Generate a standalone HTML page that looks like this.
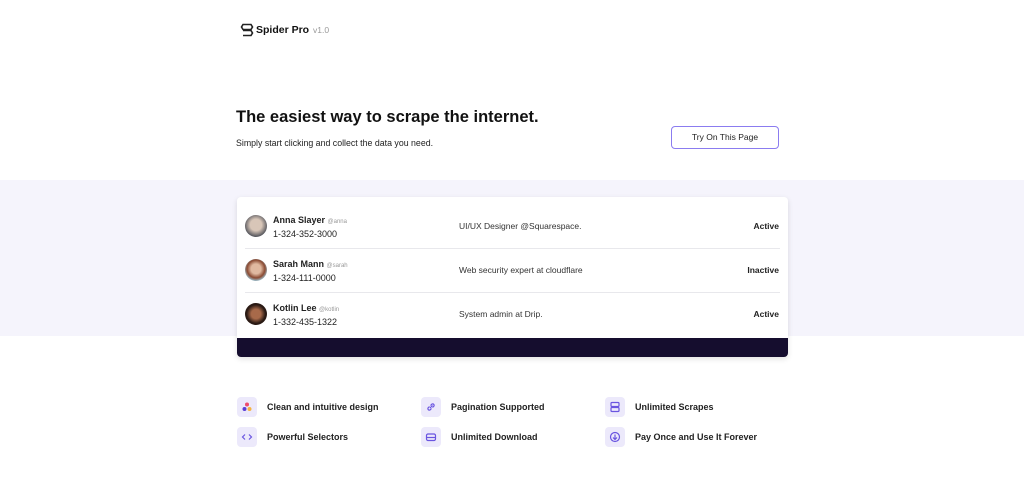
<!DOCTYPE html>
<html><head><style>
*{margin:0;padding:0;box-sizing:border-box}
body{width:1024px;height:499px;background:#fff;font-family:"Liberation Sans",sans-serif;color:#111;position:relative;overflow:hidden}
.abs{position:absolute}
.band{left:0;top:180px;width:1024px;height:156px;background:#f5f4fc}
.card{left:237px;top:197px;width:551px;height:160px;background:#fff;border-radius:4px;box-shadow:0 2px 6px rgba(0,0,0,.12);overflow:hidden}
.row{position:absolute;left:0;width:551px;height:44px}
.av{position:absolute;left:8px;top:11px;width:22px;height:22px;border-radius:50%}
.nm{position:absolute;left:36px;top:11px;font-size:9px;font-weight:bold;color:#222}
.nm small{font-weight:normal;color:#999;font-size:6px}
.ph{position:absolute;left:36px;top:25px;font-size:9px;color:#222}
.ds{position:absolute;left:222px;top:17px;font-size:8.5px;color:#333}
.st{position:absolute;right:9px;top:17px;font-size:8.5px;font-weight:bold;color:#222}
.sep{position:absolute;left:8px;right:8px;height:1px;background:#e8e8ec}
.fi{position:absolute;width:20px;height:20px;border-radius:4px;background:#ece9fb}
.ft{position:absolute;font-size:9px;font-weight:bold;color:#222}
</style></head><body>
<svg class="abs" style="left:240px;top:23px" width="14" height="14" viewBox="0 0 14 14" fill="none" stroke="#222" stroke-width="1.6"><path d="M3 1.5h8l1.5 2.5-1.5 2.5H3L1.5 4z"/><path d="M3 7.5h8l1.5 2.5-1.5 2.5H3"/></svg>
<div class="abs" style="left:256px;top:24px;font-size:10.5px;font-weight:bold">Spider Pro <span style="font-weight:normal;color:#999;font-size:8.5px;margin-left:1px">v1.0</span></div>
<div class="abs" style="left:236px;top:108px;font-size:16.5px;font-weight:bold;color:#111">The easiest way to scrape the internet.</div>
<div class="abs" style="left:236px;top:138px;font-size:8.8px;color:#222">Simply start clicking and collect the data you need.</div>
<div class="abs" style="left:671px;top:126px;width:108px;height:23px;border:1px solid #8b7cf0;border-radius:4px;font-size:8.5px;text-align:center;line-height:21px;color:#222">Try On This Page</div>
<div class="abs band"></div>
<div class="abs card">
 <div class="row" style="top:7px"><div class="av" style="background:radial-gradient(circle at 50% 45%,#d8c6b8 35%,#5a5a60 70%)"></div><div class="nm">Anna Slayer <small>@anna</small></div><div class="ph">1-324-352-3000</div><div class="ds">UI/UX Designer @Squarespace.</div><div class="st">Active</div></div>
 <div class="sep" style="top:51px"></div>
 <div class="row" style="top:51px"><div class="av" style="background:radial-gradient(circle at 50% 45%,#e0b9a0 30%,#8a4a32 55%,#9ec7d8 75%)"></div><div class="nm">Sarah Mann <small>@sarah</small></div><div class="ph">1-324-111-0000</div><div class="ds">Web security expert at cloudflare</div><div class="st">Inactive</div></div>
 <div class="sep" style="top:95px"></div>
 <div class="row" style="top:95px"><div class="av" style="background:radial-gradient(circle at 50% 50%,#a86a4a 30%,#2a1a14 60%)"></div><div class="nm">Kotlin Lee <small>@kotlin</small></div><div class="ph">1-332-435-1322</div><div class="ds">System admin at Drip.</div><div class="st">Active</div></div>
 <div style="position:absolute;left:0;top:141px;width:551px;height:19px;background:#150d2e"></div>
</div>

<div class="fi" style="left:237px;top:397px"><svg width="20" height="20"><circle cx="10" cy="7.5" r="2" fill="#ef4b6c"/><circle cx="7.5" cy="12" r="2" fill="#5b3fd6"/><circle cx="12.5" cy="12" r="2" fill="#f5b342"/></svg></div>
<div class="ft" style="left:267px;top:402px">Clean and intuitive design</div>
<div class="fi" style="left:421px;top:397px"><svg width="20" height="20" fill="none" stroke="#6a55e0" stroke-width="1.2"><path d="M9 11l2.5-2.5M8.5 9.5l-1.5 1.5a1.5 1.5 0 002 2l1.5-1.5M11.5 10.5l1.5-1.5a1.5 1.5 0 00-2-2L9.5 8.5"/></svg></div>
<div class="ft" style="left:451px;top:402px">Pagination Supported</div>
<div class="fi" style="left:605px;top:397px"><svg width="20" height="20" fill="none" stroke="#6a55e0" stroke-width="1.2"><rect x="6" y="5.5" width="8" height="4" rx="1"/><rect x="6" y="10.5" width="8" height="4" rx="1"/></svg></div>
<div class="ft" style="left:635px;top:402px">Unlimited Scrapes</div>
<div class="fi" style="left:237px;top:427px"><svg width="20" height="20" fill="none" stroke="#6a55e0" stroke-width="1.2"><path d="M8 7.5L5.5 10 8 12.5M12 7.5l2.5 2.5-2.5 2.5"/></svg></div>
<div class="ft" style="left:267px;top:432px">Powerful Selectors</div>
<div class="fi" style="left:421px;top:427px"><svg width="20" height="20" fill="none" stroke="#6a55e0" stroke-width="1.2"><rect x="5.5" y="7" width="9" height="6.5" rx="1.5"/><path d="M5.5 10.5h9"/></svg></div>
<div class="ft" style="left:451px;top:432px">Unlimited Download</div>
<div class="fi" style="left:605px;top:427px"><svg width="20" height="20" fill="none" stroke="#6a55e0" stroke-width="1.2"><circle cx="10" cy="10" r="4.5"/><path d="M10 7.5v4.5M8 10.5l2 2 2-2"/></svg></div>
<div class="ft" style="left:635px;top:432px">Pay Once and Use It Forever</div>
</body></html>
